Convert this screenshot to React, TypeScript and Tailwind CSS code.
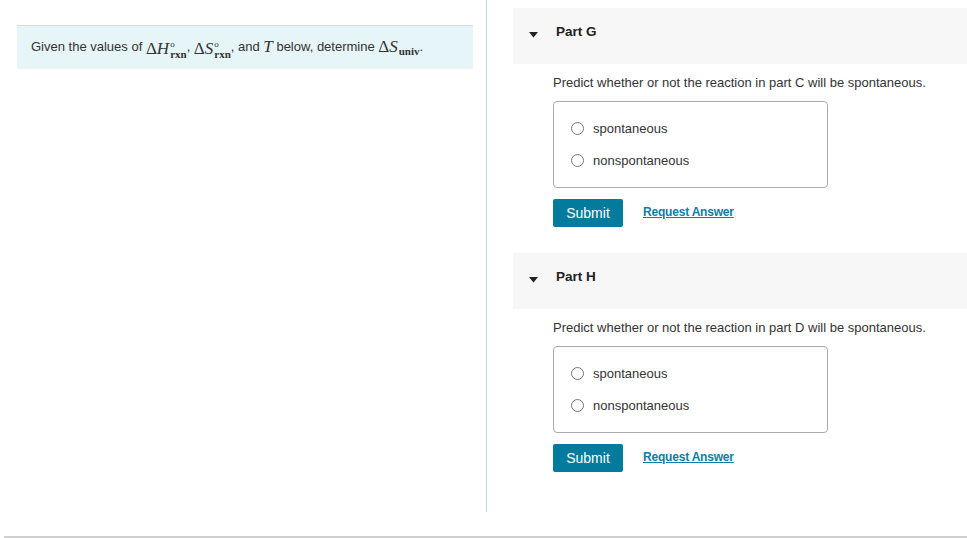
import React from "react";

const serif = { fontFamily: '"Liberation Serif", "DejaVu Serif", serif' };

function Sym({ letter, sub, deg }: { letter: string; sub: string; deg?: boolean }) {
  return (
    <span className="inline-flex items-end whitespace-nowrap" style={serif}>
      <span className="text-[17px] leading-none">Δ</span>
      <span className="text-[17px] leading-none italic">{letter}</span>
      <span className="inline-flex flex-col leading-none ml-[1px] translate-y-[3px]">
        <span className={`text-[9px] leading-[9px] ${deg ? "" : "invisible"}`}>o</span>
        <span className="text-[11px] leading-[11px] font-bold">{sub}</span>
      </span>
    </span>
  );
}

function Radio({ label }: { label: string }) {
  return (
    <label className="flex items-center gap-[9px] h-[20px]">
      <span className="w-[13px] h-[13px] rounded-full border border-[#767676] bg-white" />
      <span className="text-[13px] text-[#333]">{label}</span>
    </label>
  );
}

function Part({ name, part }: { name: string; part: string }) {
  return (
    <section className="flex flex-col">
      <div className="h-[56px] bg-[#f7f7f7] flex items-center pl-[16px]">
        <svg width="9" height="6" viewBox="0 0 9 6" className="mr-[18px] -mt-[2px]">
          <path d="M0 0 L9 0 L4.5 5.5 Z" fill="#222" />
        </svg>
        <span className="text-[13.5px] font-bold text-[#222] -mt-[8px]">{name}</span>
      </div>
      <div className="pl-[40px] pt-[11px]">
        <p className="text-[13px] text-[#333] leading-[16px]">
          Predict whether or not the reaction in part {part} will be spontaneous.
        </p>
        <div className="mt-[10px] w-[275px] h-[87px] border border-[#aaa] rounded-[4px] flex flex-col justify-center gap-[12px] pl-[17px]">
          <Radio label="spontaneous" />
          <Radio label="nonspontaneous" />
        </div>
        <div className="mt-[11px] flex items-center gap-[20px]">
          <button className="w-[70px] h-[28px] bg-[#037b9c] text-white text-[14px] rounded-[2px]">
            Submit
          </button>
          <a className="text-[12px] tracking-[-0.2px] font-bold text-[#0a7ea4] underline -mt-[2px]">Request Answer</a>
        </div>
      </div>
    </section>
  );
}

export default function App() {
  return (
    <div
      className="w-[967px] h-[538px] bg-white overflow-hidden flex flex-col"
      style={{ fontFamily: '"Liberation Sans", Arial, sans-serif' }}
    >
      <div className="flex h-[512px]">
        <div className="w-[487px] shrink-0 pt-[25px] pl-[17px] border-r border-[#c3d6e6]">
          <div className="w-[456px] h-[44px] bg-[#e6f5f7] border-t border-[#dadada] flex items-center pl-[14px] text-[13px] text-[#333] pb-[2px]">
            <span>Given the values of&nbsp;</span>
            <Sym letter="H" sub="rxn" deg />
            <span>,&nbsp;</span>
            <Sym letter="S" sub="rxn" deg />
            <span>, and&nbsp;</span>
            <span className="text-[17px] italic leading-none" style={serif}>T</span>
            <span>&nbsp;below, determine&nbsp;</span>
            <span className="inline-flex items-end" style={serif}>
              <span className="text-[17px] leading-none">Δ</span>
              <span className="text-[17px] leading-none italic">S</span>
              <span className="text-[11px] font-bold leading-none translate-y-[2px] ml-[1px]">univ</span>
            </span>
            <span>.</span>
          </div>
        </div>
        <div className="flex-1 pl-[26px] pt-[8px] flex flex-col gap-[26px]">
          <Part name="Part G" part="C" />
          <Part name="Part H" part="D" />
        </div>
      </div>
      <div className="mt-[24px] ml-[4px] border-t-2 border-[#cfcfcf]" />
    </div>
  );
}
